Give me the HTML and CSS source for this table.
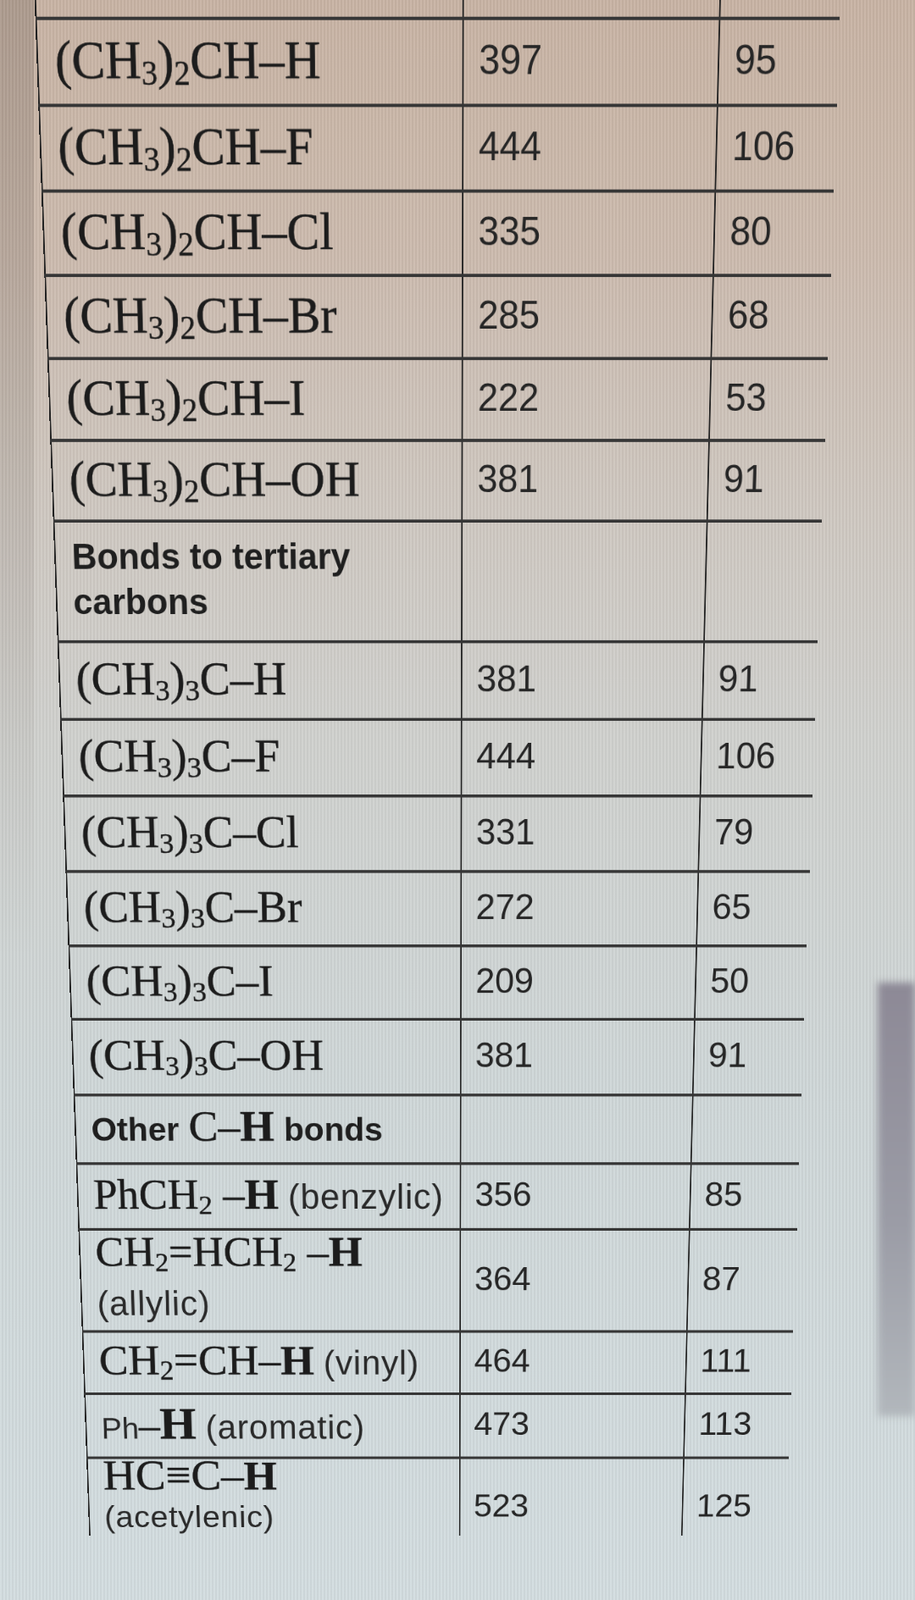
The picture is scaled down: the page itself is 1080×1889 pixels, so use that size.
FILE: index.html
```html
<!DOCTYPE html>
<html lang="en">
<head>
<meta charset="utf-8">
<title>Bond dissociation energies</title>
<link rel="stylesheet" href="styles.css">
</head>
<body>
<div class="screen">
  <div class="stage">
    <div class="sheet">
      <table class="bde">
        <colgroup><col class="c1"><col class="c2"><col class="c3"></colgroup>
        <tbody>
          <tr class="r-top"><td class="name"></td><td class="num"></td><td class="num"></td></tr>
          <tr class="r-std"><td class="name"><span class="f">(CH<sub>3</sub>)<sub>2</sub>CH–H</span></td><td class="num">397</td><td class="num">95</td></tr>
          <tr class="r-std"><td class="name"><span class="f">(CH<sub>3</sub>)<sub>2</sub>CH–F</span></td><td class="num">444</td><td class="num">106</td></tr>
          <tr class="r-std"><td class="name"><span class="f">(CH<sub>3</sub>)<sub>2</sub>CH–Cl</span></td><td class="num">335</td><td class="num">80</td></tr>
          <tr class="r-std"><td class="name"><span class="f">(CH<sub>3</sub>)<sub>2</sub>CH–Br</span></td><td class="num">285</td><td class="num">68</td></tr>
          <tr class="r-std"><td class="name"><span class="f">(CH<sub>3</sub>)<sub>2</sub>CH–I</span></td><td class="num">222</td><td class="num">53</td></tr>
          <tr class="r-std"><td class="name"><span class="f">(CH<sub>3</sub>)<sub>2</sub>CH–OH</span></td><td class="num">381</td><td class="num">91</td></tr>
          <tr class="r-head"><td class="name wrap"><span class="lbl">Bonds to tertiary carbons</span></td><td class="num"></td><td class="num"></td></tr>
          <tr class="r-std"><td class="name"><span class="f f-t">(CH<sub>3</sub>)<sub>3</sub>C–H</span></td><td class="num">381</td><td class="num">91</td></tr>
          <tr class="r-std"><td class="name"><span class="f f-t">(CH<sub>3</sub>)<sub>3</sub>C–F</span></td><td class="num">444</td><td class="num">106</td></tr>
          <tr class="r-std"><td class="name"><span class="f f-t">(CH<sub>3</sub>)<sub>3</sub>C–Cl</span></td><td class="num">331</td><td class="num">79</td></tr>
          <tr class="r-std"><td class="name"><span class="f f-t">(CH<sub>3</sub>)<sub>3</sub>C–Br</span></td><td class="num">272</td><td class="num">65</td></tr>
          <tr class="r-std"><td class="name"><span class="f f-t">(CH<sub>3</sub>)<sub>3</sub>C–I</span></td><td class="num">209</td><td class="num">50</td></tr>
          <tr class="r-tall"><td class="name"><span class="f f-t">(CH<sub>3</sub>)<sub>3</sub>C–OH</span></td><td class="num">381</td><td class="num">91</td></tr>
          <tr class="r-other"><td class="name"><span class="lbl gap">Other</span><span class="f f-c">C–</span><span class="f f-h gap">H</span><span class="lbl">bonds</span></td><td class="num"></td><td class="num"></td></tr>
          <tr class="r-ph"><td class="name"><span class="f f-b">PhCH<sub>2</sub> –</span><span class="f f-b f-h gap">H</span><span class="note">(benzylic)</span></td><td class="num">356</td><td class="num">85</td></tr>
          <tr class="r-two"><td class="name"><span class="line1"><span class="f f-b">CH<sub>2</sub>=HCH<sub>2</sub> –</span><span class="f f-b f-h">H</span></span><span class="line2 note">(allylic)</span></td><td class="num">364</td><td class="num">87</td></tr>
          <tr class="r-vinyl"><td class="name"><span class="f f-v">CH<sub>2</sub>=CH–</span><span class="f f-v f-h gap">H</span><span class="note">(vinyl)</span></td><td class="num">464</td><td class="num">111</td></tr>
          <tr class="r-arom"><td class="name"><span class="note ph">Ph</span><span class="f f-b">–</span><span class="f f-b f-h f-big gap">H</span><span class="note">(aromatic)</span></td><td class="num">473</td><td class="num">113</td></tr>
          <tr class="r-last"><td class="name top"><span class="line1 f f-a">HC≡C–<span class="f-h">H</span></span><span class="line2 note">(acetylenic)</span></td><td class="num">523</td><td class="num">125</td></tr>
        </tbody>
      </table>
    </div>
  </div>
  <div class="thumb" aria-hidden="true"></div>
</div>
</body>
</html>
```

FILE: styles.css
```css
html, body {
  margin: 0;
  padding: 0;
}

body {
  width: 1080px;
  height: 1889px;
  overflow: hidden;
  font-family: "Liberation Sans", Arial, sans-serif;
  color: #242424;
  background:
    repeating-linear-gradient(to right, rgba(255, 255, 255, .05) 0 2px, rgba(0, 0, 0, .035) 2px 4px),
    linear-gradient(to bottom, rgba(95, 85, 78, .26), rgba(95, 85, 78, .12) 35%, rgba(95, 85, 78, 0) 60%) 0 0 / 40px 100% no-repeat,
    linear-gradient(to bottom, #c8b3a4 0%, #ccbbae 16%, #cfc8c1 32%, #d0d1ce 46%, #cfd7d8 68%, #d3dde0 100%);
}

.screen {
  position: relative;
  width: 1080px;
  height: 1889px;
  overflow: hidden;
}

.stage {
  width: 1033px;
  display: flex;
  justify-content: center;
  filter: blur(0.5px);
}

.sheet {
  flex: 0 0 auto;
  width: 1057px;
  height: 2120px;
  overflow: hidden;
  transform-origin: 50% 0;
  transform: perspective(2000px) rotateX(-8.5deg) scaleX(0.9);
}

.bde {
  width: 1057px;
  border-collapse: collapse;
  table-layout: fixed;
}

.c1 { width: 561px; }
.c2 { width: 337px; }
.c3 { width: 159px; }

.bde td {
  padding: 0 0 6px 20px;
  border-left: 2px solid #222;
  border-right: 2px solid #222;
  border-top: 4px solid #363636;
  vertical-align: middle;
  white-space: nowrap;
}

.bde td.name { padding-left: 22px; }
.bde td.wrap { white-space: normal; }
.bde td.top { vertical-align: top; padding-top: 0; }

.r-top td { border-top: 0; }
.r-top { height: 22px; }
.r-std { height: 105px; }
.r-tall { height: 110px; }
.r-head { height: 160px; }
.r-other { height: 101px; }
.r-ph { height: 98px; }
.r-two { height: 155px; }
.r-vinyl { height: 96px; }
.r-arom { height: 100px; }
.r-last { height: 156px; }

.num {
  font-family: "Liberation Sans", Arial, sans-serif;
  font-size: 50px;
  line-height: 1;
  color: #262626;
}

.f {
  font-family: "Liberation Serif", "Times New Roman", serif;
  font-size: 66px;
  line-height: 1;
  color: #1c1c1c;
  -webkit-text-stroke: 0.5px #1c1c1c;
}

.f sub {
  font-size: .64em;
  vertical-align: -0.2em;
  line-height: 0;
}

.f-t { font-size: 64px; }
.f-b { font-size: 63px; }
.f-v { font-size: 65px; }
.f-a { font-size: 68px; }
.f-c { font-size: 64px; }
.f-h { font-weight: bold; font-size: 64px; }
.f-big { font-size: 70px; }

.gap { margin-right: 14px; }

.lbl {
  font-family: "Liberation Sans", Arial, sans-serif;
  font-weight: bold;
  font-size: 48px;
  line-height: 60px;
  color: #1f1f1f;
}

.note {
  font-family: "Liberation Sans", Arial, sans-serif;
  font-size: 51px;
  letter-spacing: 1px;
  color: #2a2a2a;
}

.note.ph { font-size: 46px; letter-spacing: 0; }

.line1 {
  display: block;
  line-height: 60px;
}

.line1 .f { line-height: inherit; }

.line2 {
  display: block;
  line-height: 66px;
}

.r-last .line1 { line-height: 50px; }
.r-last .line2 { font-size: 48px; line-height: 80px; }

.thumb {
  position: absolute;
  right: 0;
  top: 1160px;
  width: 44px;
  height: 512px;
  background: linear-gradient(to bottom, #8d8996, #9b9ca6 55%, #b2b7bc);
  filter: blur(4px);
}
```
